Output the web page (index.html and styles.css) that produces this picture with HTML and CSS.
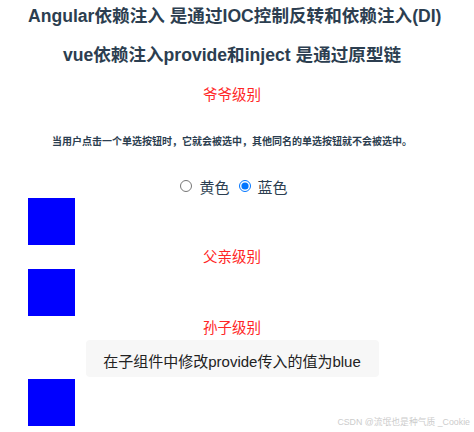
FILE: index.html
```html
<!DOCTYPE html>
<html lang="zh">
<head>
<meta charset="utf-8">
<link rel="stylesheet" href="styles.css">
</head>
<body>
<div class="app">
  <h1 class="title">Angular依赖注入 是通过IOC控制反转和依赖注入(DI)</h1>
  <h1 class="title title-2">vue依赖注入provide和inject 是通过原型链</h1>
  <div class="level level-top">爷爷级别</div>
  <p class="hint">当用户点击一个单选按钮时，它就会被选中，其他同名的单选按钮就不会被选中。</p>
  <div class="radios">
    <label class="opt"><input type="radio" name="color" value="yellow"><span>黄色</span></label>
    <label class="opt"><input type="radio" name="color" value="blue" checked><span>蓝色</span></label>
  </div>
  <div class="square"></div>
  <div class="child">
    <div class="level">父亲级别</div>
    <div class="square"></div>
    <div class="grandchild">
      <div class="level">孙子级别</div>
      <div class="btn-row"><button class="btn">在子组件中修改provide传入的值为blue</button></div>
      <div class="square"></div>
    </div>
  </div>
</div>
<div class="watermark">CSDN @流氓也是种气质 _Cookie</div>
</body>
</html>
```

FILE: styles.css
```css
html, body {
  margin: 0;
  padding: 0;
  background: #ffffff;
}
body {
  font-family: "Liberation Sans", "Noto Sans CJK SC", sans-serif;
  color: #2c3e50;
  width: 474px;
  height: 432px;
  overflow: hidden;
  position: relative;
}
.app {
  width: 408px;
  padding-left: 28px;
  text-align: center;
}
.title {
  margin: 0;
  font-size: 17.6px;
  line-height: 32px;
  font-weight: bold;
  white-space: nowrap;
  color: #2c3e50;
}
.title-2 {
  margin-top: 7px;
}
.level {
  color: #ff2626;
  font-size: 14.5px;
  line-height: 20px;
  margin-top: 2px;
}
.level-top {
  margin-top: 14px;
}
.hint {
  margin: 29px 0 0;
  font-size: 10px;
  line-height: 16px;
  font-weight: bold;
  white-space: nowrap;
  color: #2c3e50;
}
.radios {
  margin-top: 26px;
  height: 20px;
  display: flex;
  justify-content: center;
  align-items: center;
  gap: 9px;
  font-size: 15px;
  color: #2c3e50;
  padding-left: 4px;
}
.opt {
  display: flex;
  align-items: center;
  gap: 7px;
}
.opt input {
  margin: 0;
  width: 12px;
  height: 12px;
}
.square {
  width: 47px;
  height: 47px;
  background: #0000ff;
  margin-top: 2px;
}
.btn-row {
  margin-top: 2px;
  display: flex;
  justify-content: center;
}
.btn {
  width: 293px;
  height: 37px;
  border: none;
  border-radius: 4px;
  background: #f7f7f7;
  font-family: "Liberation Sans", "Noto Sans CJK SC", sans-serif;
  font-size: 15px;
  color: #222222;
  padding: 3px 0 0;
  cursor: pointer;
}
.watermark {
  position: absolute;
  right: 4px;
  bottom: 4px;
  font-size: 8.8px;
  color: #cccccc;
  white-space: nowrap;
}
```
